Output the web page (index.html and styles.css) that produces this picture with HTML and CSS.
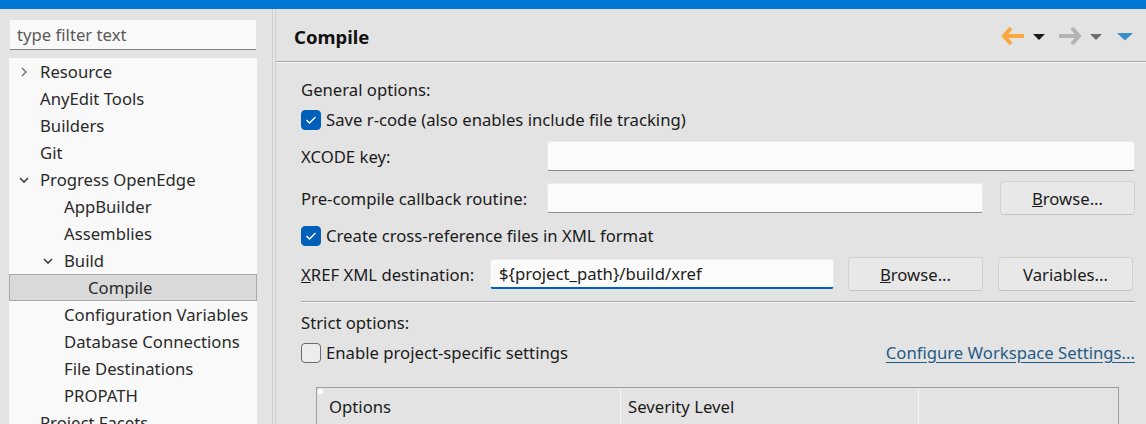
FILE: index.html
```html
<!DOCTYPE html>
<html>
<head>
<meta charset="utf-8">
<link rel="stylesheet" href="styles.css">
</head>
<body>
<div class="titlebar"></div>
<div class="main">
  <aside class="sidebar">
    <div class="filter">type filter text</div>
    <ul class="tree">
      <li class="row lvl0"><span class="twisty"><svg width="10" height="12" viewBox="0 0 10 12"><path d="M3 2 L7 6 L3 10" fill="none" stroke="#707070" stroke-width="1.4"/></svg></span>Resource</li>
      <li class="row lvl0"><span class="twisty"></span>AnyEdit Tools</li>
      <li class="row lvl0"><span class="twisty"></span>Builders</li>
      <li class="row lvl0"><span class="twisty"></span>Git</li>
      <li class="row lvl0"><span class="twisty"><svg width="12" height="10" viewBox="0 0 12 10"><path d="M2 3 L6 7 L10 3" fill="none" stroke="#404040" stroke-width="1.6"/></svg></span>Progress OpenEdge</li>
      <li class="row lvl1"><span class="twisty"></span>AppBuilder</li>
      <li class="row lvl1"><span class="twisty"></span>Assemblies</li>
      <li class="row lvl1"><span class="twisty"><svg width="12" height="10" viewBox="0 0 12 10"><path d="M2 3 L6 7 L10 3" fill="none" stroke="#404040" stroke-width="1.6"/></svg></span>Build</li>
      <li class="row lvl2 selected"><span class="twisty"></span>Compile</li>
      <li class="row lvl1"><span class="twisty"></span>Configuration Variables</li>
      <li class="row lvl1"><span class="twisty"></span>Database Connections</li>
      <li class="row lvl1"><span class="twisty"></span>File Destinations</li>
      <li class="row lvl1"><span class="twisty"></span>PROPATH</li>
      <li class="row lvl0"><span class="twisty"></span>Project Facets</li>
    </ul>
  </aside>
  <div class="sash"></div>
  <section class="content">
    <header class="pagehead">
      <h1>Compile</h1>
      <div class="nav">
        <svg class="ico" width="26" height="24" viewBox="0 0 26 24"><path d="M11 4 L4 12 L11 20" fill="none" stroke="#f9a83f" stroke-width="4" stroke-linejoin="miter"/><path d="M5 12 H24" stroke="#f9a83f" stroke-width="4"/></svg>
        <svg class="tri" width="12" height="8" viewBox="0 0 12 8"><path d="M0 1 H12 L6 7 Z" fill="#1a1a1a"/></svg>
        <svg class="ico" width="26" height="24" viewBox="0 0 26 24"><path d="M15 4 L22 12 L15 20" fill="none" stroke="#b3b3b3" stroke-width="4" stroke-linejoin="miter"/><path d="M2 12 H21" stroke="#b3b3b3" stroke-width="4"/></svg>
        <svg class="tri" width="12" height="8" viewBox="0 0 12 8"><path d="M0 1 H12 L6 7 Z" fill="#6e6e6e"/></svg>
        <svg class="tri blue" width="16" height="9" viewBox="0 0 16 9"><path d="M0 1 H16 L8 8.5 Z" fill="#3c8fc6"/></svg>
      </div>
    </header>
    <div class="form">
      <div class="label-line">General options:</div>
      <div class="check-line"><span class="cb checked"><svg width="12" height="10" viewBox="0 0 12 10"><path d="M1.5 5 L4.5 8 L10.5 2" fill="none" stroke="#fff" stroke-width="1.4"/></svg></span>Save r-code (also enables include file tracking)</div>
      <div class="field-row r30">
        <span class="flabel w246">XCODE key:</span>
        <span class="input grow"></span>
      </div>
      <div class="field-row r34">
        <span class="flabel w246">Pre-compile callback routine:</span>
        <span class="input w436"></span>
        <span class="btn"><u>B</u>rowse...</span>
      </div>
      <div class="check-line c2"><span class="cb checked"><svg width="12" height="10" viewBox="0 0 12 10"><path d="M1.5 5 L4.5 8 L10.5 2" fill="none" stroke="#fff" stroke-width="1.4"/></svg></span>Create cross-reference files in XML format</div>
      <div class="field-row r34">
        <span class="flabel w189"><u>X</u>REF XML destination:</span>
        <span class="input focus w344">${project_path}/build/xref</span>
        <span class="btn gap14"><u>B</u>rowse...</span>
        <span class="btn">Variables...</span>
      </div>
      <div class="sep"></div>
      <div class="label-line l2">Strict options:</div>
      <div class="check-line c3"><span class="cb"></span>Enable project-specific settings<a class="link">Configure Workspace Settings...</a></div>
      <div class="table">
        <div class="th c1">Options</div>
        <div class="th c2">Severity Level</div>
        <div class="th c3"></div>
      </div>
    </div>
  </section>
</div>
</body>
</html>
```
FILE: styles.css
```css
* { box-sizing: border-box; }
html, body { margin: 0; padding: 0; }
body {
  width: 1146px;
  height: 424px;
  overflow: hidden;
  background: #e3e3e3;
  font-family: "Noto Sans", "Open Sans", sans-serif;
  font-size: 16.7px;
  color: #1b1b1b;
}
.titlebar { height: 9px; background: #0078d7; }
.main { display: flex; height: 415px; overflow: hidden; }

.sidebar { width: 272px; padding: 11px 0 0 9px; flex: none; overflow: hidden; }
.filter {
  margin-left: 1px;
  width: 246px;
  height: 30px;
  background: #f9f9f9;
  border-bottom: 1px solid #838383;
  color: #5a5a5a;
  padding: 3px 0 0 7px;
  line-height: 24px;
}
.tree {
  list-style: none;
  margin: 8px 0 0 0;
  padding: 0;
  width: 248px;
  background: #f9f9f9;
  height: 366px;
  overflow: hidden;
}
.row {
  height: 27px;
  line-height: 26px;
  display: flex;
  align-items: center;
  white-space: nowrap;
  color: #2a2a2a;
}
.twisty { width: 14px; height: 12px; display: inline-flex; align-items: center; justify-content: center; margin-right: 9px; }
.lvl0 { padding-left: 8px; }
.lvl1 { padding-left: 32px; }
.lvl2 { padding-left: 56px; }
.selected { background: #d9d9d9; border: 1px solid #a9a9a9; }
.selected.lvl2 { padding-left: 55px; }

.sash { width: 4px; flex: none; border-left: 1px solid #d0d0d0; border-right: 1px solid #cdcdcd; background: #e6e6e6; }

.content { flex: 1; min-width: 0; }
.pagehead {
  height: 53px;
  display: flex;
  align-items: center;
  justify-content: space-between;
  padding: 4px 13px 0 18px;
  border-bottom: 1px solid #a6a6a6;
  box-shadow: 0 1px 0 #f6f6f6;
}
.pagehead h1 { margin: 0; font-size: 18.5px; font-weight: bold; color: #111; line-height: 24px; }
.nav { display: flex; align-items: center; padding-bottom: 2px; }
.nav .ico { margin-right: 7px; }
.nav .tri { margin-right: 12px; margin-top: 1px; }
.nav .tri.blue { margin-right: 0; margin-left: 3px; }

.form { padding: 17px 11px 0 25px; }
.label-line { height: 22px; line-height: 22px; white-space: nowrap; }
.check-line { height: 22px; line-height: 22px; display: flex; align-items: center; margin-top: 8px; white-space: nowrap; }
.check-line.c2 { margin-top: 10px; }
.check-line.c3 { margin-top: 8px; }
.cb {
  width: 20px; height: 20px; border-radius: 4px;
  border: 1px solid #6b6b6b;
  background: #ededed;
  display: inline-flex; align-items: center; justify-content: center;
  margin-right: 5px; flex: none;
}
.cb.checked { background: #005fb8; border-color: #005fb8; }

.field-row { display: flex; align-items: center; margin-top: 10px; }
.r30 { height: 30px; }
.r34 { height: 34px; }
.flabel { flex: none; white-space: nowrap; }
.w246 { width: 246px; }
.w189 { width: 189px; }
.input {
  height: 30px;
  background: #fbfbfb;
  border: 1px solid #ececec;
  border-bottom: 1px solid #8a8a8a;
  border-radius: 3px;
  padding: 0 8px;
  line-height: 28px;
  white-space: nowrap;
  color: #1b1b1b;
}
.grow { flex: 1; }
.w436 { width: 436px; flex: none; }
.w344 { width: 344px; flex: none; }
.input.focus { border-bottom: 2px solid #005fb8; }
.btn {
  width: 135px; height: 34px; flex: none;
  margin-left: auto;
  background: #e8e8e8;
  border: 1px solid #d2d2d2;
  border-bottom-color: #c4c4c4;
  border-radius: 4px;
  display: inline-flex; align-items: center; justify-content: center;
  color: #1b1b1b;
}
.btn.gap14 { margin-left: 14px; margin-right: 15px; }
.field-row .btn + .btn { margin-left: 0; }

.sep { margin-top: 10px; height: 2px; border-top: 1px solid #a8a8a8; border-bottom: 1px solid #f4f4f4; }
.label-line.l2 { margin-top: 9px; }
.link { margin-left: auto; color: #245c86; text-decoration: underline; text-underline-offset: 3px; }

.table {
  margin: 23px 16px 0 15px;
  height: 40px;
  border: 1px solid #9e9e9e;
  border-bottom: none;
  display: flex;
  position: relative;
}
.table::before { content: ""; position: absolute; left: 1px; top: 1px; width: 5px; height: 5px; background: #fafafa; }
.th { height: 100%; padding: 7px 0 0 12px; border-right: 1px solid #f3f3f3; white-space: nowrap; }
.th.c1 { width: 304px; }
.th.c2 { width: 298px; padding-left: 7px; }
.th.c3 { flex: 1; border-right: none; }
```
